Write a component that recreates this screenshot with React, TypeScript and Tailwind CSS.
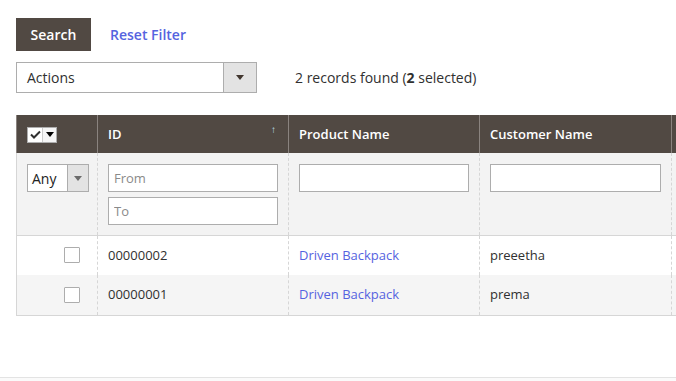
const rows = [
  { id: "00000002", product: "Driven Backpack", customer: "preeetha" },
  { id: "00000001", product: "Driven Backpack", customer: "prema" },
];

function Arrow() {
  return (
    <span className="inline-block h-0 w-0 border-x-[4px] border-t-[5px] border-x-transparent border-t-[#41362f]" />
  );
}

export default function App() {
  return (
    <div
      className="h-[381px] w-[676px] overflow-hidden bg-white text-[#303030]"
      style={{ fontFamily: '"Open Sans", "Liberation Sans", sans-serif' }}
    >
      <div className="pl-4 pt-[18px]">
        {/* Top buttons */}
        <div className="flex items-center">
          <button className="h-[33px] w-[75px] bg-[#514943] text-[14px] font-semibold text-white">
            Search
          </button>
          <a className="ml-[19px] text-[14px] font-semibold text-[#5563e0]">
            Reset Filter
          </a>
        </div>

        {/* Mass actions */}
        <div className="mt-[11px] flex items-center">
          <div className="flex h-[31px] w-[241px] border border-[#adadad] bg-white">
            <div className="flex flex-1 items-center pl-[10px] text-[14px] text-[#303030]">
              Actions
            </div>
            <div className="flex w-[33px] items-center justify-center border-l border-[#adadad] bg-[#e3e3e3]">
              <Arrow />
            </div>
          </div>
          <div className="ml-[38px] text-[14px] text-[#303030]">
            2 records found (<b>2</b> selected)
          </div>
        </div>

        {/* Grid */}
        <table className="mt-[22px] w-[810px] table-fixed border-collapse text-[13px]">
          <colgroup>
            <col className="w-[81px]" />
            <col className="w-[191px]" />
            <col className="w-[191px]" />
            <col className="w-[192px]" />
            <col className="w-[155px]" />
          </colgroup>
          <thead>
            <tr className="h-[38px] bg-[#514943] text-left text-white">
              <th className="border-x border-[#8a837f] pl-[10px] pt-[1px] font-normal">
                <div className="flex h-[16px] w-[30px] items-center border border-[#adadad] bg-white">
                  <div className="flex h-full w-[15px] items-center justify-center border-r border-[#cccccc]">
                    <svg width="11" height="9" viewBox="0 0 11 9">
                      <path d="M1 4.5 L4 7.5 L10 1.5" fill="none" stroke="#303030" strokeWidth="2" />
                    </svg>
                  </div>
                  <div className="flex h-full flex-1 items-center justify-center bg-[#f5f5f5]">
                    <span className="inline-block h-0 w-0 border-x-[4px] border-t-[5px] border-x-transparent border-t-black" />
                  </div>
                </div>
              </th>
              <th className="relative border-x border-[#8a837f] pl-[10px] pt-[2px] font-semibold">
                ID
                <span className="absolute right-[12px] top-[7px] text-[10px] font-normal text-[#c2e2f0]">↑</span>
              </th>
              <th className="border-x border-[#8a837f] pl-[10px] pt-[2px] font-semibold">Product Name</th>
              <th className="border-x border-[#8a837f] pl-[10px] pt-[2px] font-semibold">Customer Name</th>
              <th className="border-x border-[#8a837f] pl-[10px] font-semibold"></th>
            </tr>
          </thead>
          <tbody>
            <tr className="h-[82px] bg-[#f3f3f3] align-top">
              <td className="border-l border-r border-dashed border-l-[#d6d6d6] border-r-[#d6d6d6] pl-[10px] pt-[11px]" style={{ borderLeftStyle: "solid" }}>
                <div className="flex h-[28px] w-[62px] border border-[#adadad] bg-white">
                  <div className="flex flex-1 items-center pl-[4px] text-[14px] text-[#222]">Any</div>
                  <div className="flex w-[21px] items-center justify-center border-l border-[#adadad] bg-[#e3e3e3]">
                    <span className="inline-block h-0 w-0 border-x-[4px] border-t-[5px] border-x-transparent border-t-[#6b6b6b]" />
                  </div>
                </div>
              </td>
              <td className="border-x border-dashed border-[#d6d6d6] px-[10px] pt-[11px]">
                <input
                  placeholder="From"
                  className="block h-[28px] w-[170px] border border-[#adadad] bg-white px-[5px] text-[13px] placeholder:text-[#8a8a8a]"
                />
                <input
                  placeholder="To"
                  className="mt-[5px] block h-[28px] w-[170px] border border-[#adadad] bg-white px-[5px] text-[13px] placeholder:text-[#8a8a8a]"
                />
              </td>
              <td className="border-x border-dashed border-[#d6d6d6] px-[10px] pt-[11px]">
                <input className="block h-[28px] w-[170px] border border-[#adadad] bg-white" />
              </td>
              <td className="border-x border-dashed border-[#d6d6d6] px-[10px] pt-[11px]">
                <input className="block h-[28px] w-[171px] border border-[#adadad] bg-white" />
              </td>
              <td className="border-x border-dashed border-[#d6d6d6]"></td>
            </tr>
            {rows.map((r, i) => (
              <tr
                key={r.id}
                className={`h-[40px] ${i === 0 ? "border-t border-[#d6d6d6] bg-white" : "bg-[#f5f5f5]"}`}
              >
                <td className="border-x border-dashed border-[#d6d6d6] pl-[47px]" style={{ borderLeftStyle: "solid" }}>
                  <span className="block h-[16px] w-[16px] rounded-[1px] border border-[#adadad] bg-white" />
                </td>
                <td className="border-x border-dashed border-[#d6d6d6] pl-[10px] text-[#303030]">{r.id}</td>
                <td className="border-x border-dashed border-[#d6d6d6] pl-[10px] text-[#5563e0]">{r.product}</td>
                <td className="border-x border-dashed border-[#d6d6d6] pl-[10px] text-[#303030]">{r.customer}</td>
                <td className="border-x border-dashed border-[#d6d6d6]"></td>
              </tr>
            ))}
            <tr className="border-t border-[#d6d6d6]" />
          </tbody>
        </table>
      </div>
      <div className="mt-[62px] h-[10px] border-t border-[#e3e3e3] bg-[#fafafa]" />
    </div>
  );
}
